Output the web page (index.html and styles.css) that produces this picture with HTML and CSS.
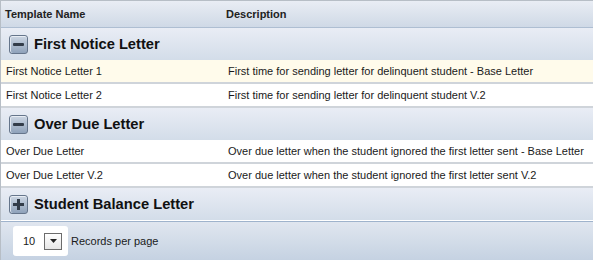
FILE: index.html
```html
<!DOCTYPE html>
<html>
<head>
<meta charset="utf-8">
<link rel="stylesheet" href="styles.css">
</head>
<body>
<div class="grid">
  <div class="hdr">
    <div class="c1">Template Name</div>
    <div class="c2">Description</div>
  </div>

  <div class="group">
    <span class="tog minus"></span><span class="gtitle">First Notice Letter</span>
  </div>
  <div class="row sel">
    <div class="c1">First Notice Letter 1</div>
    <div class="c2">First time for sending letter for delinquent student - Base Letter</div>
  </div>
  <div class="row">
    <div class="c1">First Notice Letter 2</div>
    <div class="c2">First time for sending letter for delinquent student V.2</div>
  </div>

  <div class="group">
    <span class="tog minus"></span><span class="gtitle">Over Due Letter</span>
  </div>
  <div class="row">
    <div class="c1">Over Due Letter</div>
    <div class="c2">Over due letter when the student ignored the first letter sent - Base Letter</div>
  </div>
  <div class="row">
    <div class="c1">Over Due Letter V.2</div>
    <div class="c2">Over due letter when the student ignored the first letter sent V.2</div>
  </div>

  <div class="group last">
    <span class="tog plus"></span><span class="gtitle">Student Balance Letter</span>
  </div>

  <div class="pager">
    <div class="sizebox">
      <span class="num">10</span>
      <span class="dd"><svg width="7" height="4" viewBox="0 0 7 4"><path d="M0 0H7L3.5 4Z" fill="#222"/></svg></span>
    </div>
    <span class="rpp">Records per page</span>
  </div>
</div>
</body>
</html>
```

FILE: styles.css
```css
html, body {
  margin: 0;
  padding: 0;
  background: #ffffff;
}
body {
  font-family: "Liberation Sans", Arial, sans-serif;
  font-size: 11px;
  color: #1a1a1a;
  width: 593px;
  height: 260px;
  overflow: hidden;
}
.grid {
  border-top: 1px solid #b7bec6;
  border-left: 1px solid #b7bec6;
  height: 259px;
  display: flex;
  flex-direction: column;
}
.hdr {
  height: 26px;
  display: flex;
  align-items: center;
  background: linear-gradient(#e9edf4, #cfd9e6);
  border-bottom: 1px solid #aebed2;
  font-weight: bold;
  color: #222;
}
.hdr .c1 { width: 221px; padding-left: 4px; }
.hdr .c2 { padding-left: 0; }
.group {
  height: 32px;
  display: flex;
  align-items: center;
  background: linear-gradient(#e9edf5, #d3dde9);
  padding-left: 8px;
}
.group.last {
  height: 32px;
  border-bottom: 1px solid #ffffff;
  box-shadow: 0 1px 0 #9fb3cc;
}
.tog {
  width: 17px;
  height: 17px;
  border: 1px solid #65758b;
  border-radius: 3px;
  background: linear-gradient(#ccd6e3, #8fa2ba);
  position: relative;
  box-sizing: content-box;
  box-shadow: inset 0 1px 0 #e8edf4, inset 1px 0 0 #dfe6ef;
}
.tog.minus::before {
  content: "";
  position: absolute;
  left: 3px;
  top: 7px;
  width: 11px;
  height: 3px;
  background: #323c49;
  border-radius: 1px;
}
.tog.plus::before {
  content: "";
  position: absolute;
  left: 3px;
  top: 7px;
  width: 11px;
  height: 3px;
  background: #323c49;
}
.tog.plus::after {
  content: "";
  position: absolute;
  left: 7px;
  top: 3px;
  width: 3px;
  height: 11px;
  background: #323c49;
}
.gtitle {
  font-weight: bold;
  font-size: 14.7px;
  margin-left: 6px;
  color: #111;
}
.row {
  height: 22px;
  display: flex;
  align-items: center;
  background: #ffffff;
  border-bottom: 2px solid #cfd4da;
}
.row.sel { background: #fffbeb; }
.row .c1 { width: 222px; padding-left: 5px; }
.pager {
  flex: 1;
  display: flex;
  align-items: center;
  background: linear-gradient(#e0e6ef, #c5d2e2);
  padding-left: 12px;
  margin-top: 1px;
}
.sizebox {
  width: 55px;
  height: 30px;
  background: #ffffff;
  border-radius: 3px;
  display: flex;
  align-items: center;
  box-sizing: border-box;
  padding-left: 10px;
}
.num { width: 21px; }
.dd {
  width: 16px;
  height: 15px;
  border: 1px solid #6c6c6c;
  background: linear-gradient(#ffffff, #e6e6e6);
  display: flex;
  align-items: center;
  justify-content: center;
}
.rpp { margin-left: 3px; }
```
